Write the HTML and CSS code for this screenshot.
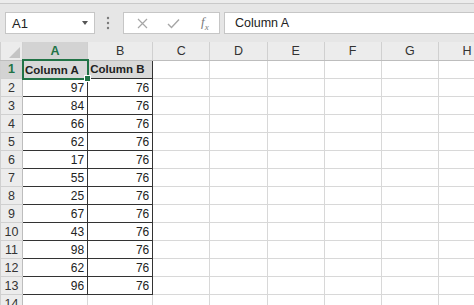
FILE: index.html
```html
<!DOCTYPE html>
<html lang="en">
  <head>
    <meta charset="UTF-8" />
    <title>Sheet1</title>
    <link rel="stylesheet" href="styles.css">
  </head>
  <body>
    <div class="ribbon-edge"></div>

    <!-- name box + formula bar -->
    <div class="toolbar">
      <div class="name-box">
        <span>A1</span>
        <span class="caret"></span>
      </div>
      <svg class="grip" width="4" height="14" viewBox="0 0 4 14">
        <circle cx="2" cy="2" r="1.2" fill="#7a7a7a" />
        <circle cx="2" cy="7" r="1.2" fill="#7a7a7a" />
        <circle cx="2" cy="12" r="1.2" fill="#7a7a7a" />
      </svg>
      <div class="fx-buttons">
        <svg width="11" height="11" viewBox="0 0 11 11">
          <path d="M1 1 L10 10 M10 1 L1 10" stroke="#a6a6a6" stroke-width="1.2" fill="none" />
        </svg>
        <svg width="13" height="11" viewBox="0 0 13 11">
          <path d="M1 6 L4.5 9.5 L12 1.5" stroke="#a6a6a6" stroke-width="1.4" fill="none" />
        </svg>
        <span class="fx"><i>f</i><sub>x</sub></span>
      </div>
      <div class="formula">Column A</div>
    </div>

    <table class="sheet">
      <colgroup>
        <col class="w-row" />
        <col class="w-a" />
        <col class="w-b" />
        <col class="w-std" />
        <col class="w-std" />
        <col class="w-std" />
        <col class="w-std" />
        <col class="w-std" />
        <col class="w-std" />
      </colgroup>
      <thead>
        <tr>
          <th class="corner"><span class="tri"></span></th>
          <th class="active-col">A</th>
          <th>B</th>
          <th>C</th>
          <th>D</th>
          <th>E</th>
          <th>F</th>
          <th>G</th>
          <th>H</th>
        </tr>
      </thead>
      <tbody id="rows"></tbody>
    </table>

    <script>
      const a = [97, 84, 66, 62, 17, 55, 25, 67, 43, 98, 62, 96];
      const body = document.getElementById("rows");

      let html = `
        <tr>
          <th class="active-row">1</th>
          <td class="head boxed selected">Column A<span class="handle"></span></td>
          <td class="head boxed">Column B</td>
          <td></td><td></td><td></td><td></td><td></td><td></td>
        </tr>`;

      a.forEach((val, i) => {
        html += `
          <tr>
            <th>${i + 2}</th>
            <td class="num boxed">${val}</td>
            <td class="num boxed">76</td>
            <td></td><td></td><td></td><td></td><td></td><td></td>
          </tr>`;
      });

      html += `
        <tr>
          <th>14</th>
          <td></td><td></td><td></td><td></td><td></td><td></td><td></td><td></td>
        </tr>`;

      body.innerHTML = html;
    </script>
  </body>
</html>
```

FILE: styles.css
```css
body {
  margin: 0;
  width: 474px;
  height: 305px;
  overflow: hidden;
  background-color: #e6e6e6;
  font-family: "Liberation Sans", Arial, sans-serif;
  color: #222;
}

.ribbon-edge {
  height: 3px;
  background-color: #ececec;
  border-bottom: 1px solid #c9c9c9;
}

.toolbar {
  display: flex;
  align-items: center;
  height: 22px;
  padding: 8px 0 8px 5px;
}

.name-box {
  display: flex;
  align-items: center;
  justify-content: space-between;
  box-sizing: border-box;
  width: 90px;
  height: 22px;
  padding: 0 6px 0 6px;
  background-color: #fff;
  border: 1px solid #c6c6c6;
  font-size: 13px;
}

.caret {
  width: 0;
  height: 0;
  border-left: 3.5px solid transparent;
  border-right: 3.5px solid transparent;
  border-top: 4px solid #555;
}

.grip {
  margin: 0 13px 0 11px;
}

.fx-buttons {
  display: flex;
  align-items: center;
  gap: 19px;
  box-sizing: border-box;
  width: 97px;
  height: 22px;
  padding-left: 13px;
  background-color: #fff;
  border: 1px solid #c6c6c6;
}

.fx {
  font-family: "Liberation Serif", serif;
  font-size: 13px;
  color: #7a7a7a;
  margin-left: 2px;
}

.fx sub {
  font-size: 9px;
  font-style: italic;
}

.formula {
  flex: 1;
  box-sizing: border-box;
  height: 22px;
  margin-left: 4px;
  padding: 3px 0 0 10px;
  background-color: #fff;
  border: 1px solid #c6c6c6;
  border-right: none;
  font-size: 12.5px;
}

.sheet {
  border-collapse: collapse;
  table-layout: fixed;
  width: 496px;
  background-color: #fff;
  font-size: 12px;
}

.w-row { width: 22px; }
.w-a { width: 65px; }
.w-b { width: 65px; }
.w-std { width: 57px; }

th,
td {
  height: 17px;
  padding: 0 3px;
  border: 1px solid #d8d8d8;
  overflow: hidden;
  white-space: nowrap;
}

th {
  background-color: #ececec;
  border-color: #d0d0d0;
  font-weight: normal;
  font-size: 12.5px;
  color: #333;
  text-align: center;
}

thead th {
  border-top: none;
  border-bottom-color: #bdbdbd;
}

tbody th {
  padding: 0;
  border-right-color: #bdbdbd;
}

.corner {
  position: relative;
}

.tri {
  position: absolute;
  right: 2px;
  bottom: 2px;
  width: 0;
  height: 0;
  border-left: 11px solid transparent;
  border-bottom: 11px solid #c4c4c4;
}

.active-col {
  background-color: #d3d3d3;
  color: #217346;
  font-weight: bold;
  border-bottom: 2px solid #217346;
}

.active-row {
  background-color: #d3d3d3;
  color: #217346;
  font-weight: bold;
}

.boxed {
  border-color: #333;
}

.head {
  background-color: #d9d9d9;
  font-weight: bold;
  font-size: 11.5px;
  padding-left: 2px;
}

.num {
  text-align: right;
}

.selected {
  position: relative;
  outline: 2px solid #217346;
  outline-offset: -1px;
  overflow: visible;
}

.handle {
  position: absolute;
  right: -4px;
  bottom: -4px;
  width: 5px;
  height: 5px;
  background-color: #217346;
  border: 1px solid #fff;
  z-index: 2;
}
```
